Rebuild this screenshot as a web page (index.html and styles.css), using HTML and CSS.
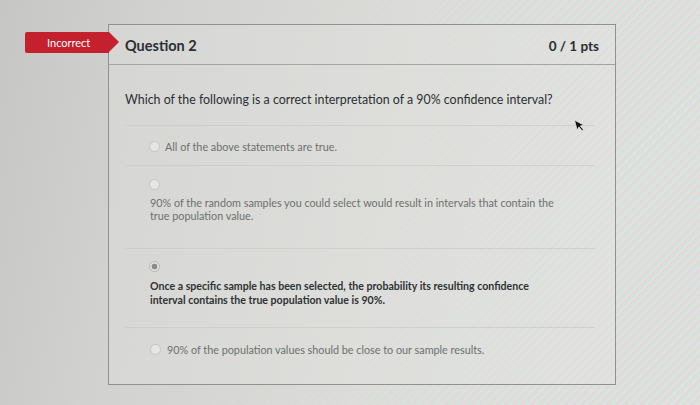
FILE: index.html
```html
<!DOCTYPE html>
<html>
<head>
<meta charset="utf-8">
<link rel="stylesheet" href="styles.css">
</head>
<body>
<div class="page">
  <div class="card">
    <div class="badge">Incorrect</div>
    <div class="header">
      <span class="qtitle">Question 2</span>
      <span class="pts">0 / 1 pts</span>
    </div>
    <div class="qbody">
      <p class="qtext">Which of the following is a correct interpretation of a 90% confidence interval?</p>
      <div class="answers">
        <div class="answer a1">
          <span class="radio"></span><span class="atext">All of the above statements are true.</span>
        </div>
        <div class="answer a2">
          <span class="radio"></span>
          <div class="atext">90% of the random samples you could select would result in intervals that contain the true population value.</div>
        </div>
        <div class="answer a3 selected">
          <span class="radio on"></span>
          <div class="atext">Once a specific sample has been selected, the probability its resulting confidence interval contains the true population value is 90%.</div>
        </div>
        <div class="answer a4">
          <span class="radio"></span><span class="atext">90% of the population values should be close to our sample results.</span>
        </div>
      </div>
    </div>
    <svg class="cursor" width="10" height="14" viewBox="0 0 10 14"><path d="M1 1 L1 11 L3.5 8.5 L5.5 13 L7 12.3 L5 8 L8.5 8 Z" fill="#111" stroke="#eee" stroke-width="0.6"/></svg>
  </div>
</div>
</body>
</html>
```
FILE: styles.css
```css
html, body {
  margin: 0;
  height: 100%;
}
body {
  width: 700px;
  height: 405px;
  overflow: hidden;
  font-family: Lato, "Open Sans", "Liberation Sans", sans-serif;
  background:
    linear-gradient(100deg, rgba(198,198,196,1) 0%, rgba(208,208,206,0.9) 20%, rgba(218,218,214,0.55) 55%, rgba(222,226,218,0) 80%),
    repeating-linear-gradient(135deg, #e8d6df 0px, #e8d6df 2px, #d3e6d4 2px, #d3e6d4 4px, #dde2e4 4px, #dde2e4 6px);
}
.page {
  padding: 24px 0 0 108px;
}
.card {
  position: relative;
  width: 508px;
  height: 361px;
  border: 1px solid #8f9290;
  box-sizing: border-box;
  background: rgba(226,226,224,0.35);
}
.badge {
  position: absolute;
  left: -84px;
  top: 7px;
  width: 84px;
  height: 21px;
  background: #c5202d;
  color: #fff;
  font-size: 11px;
  line-height: 21px;
  padding-left: 22px;
  box-sizing: border-box;
  border-radius: 2px 0 0 2px;
}
.badge::after {
  content: "";
  position: absolute;
  right: -10px;
  top: 0;
  border-left: 10px solid #c5202d;
  border-top: 10.5px solid transparent;
  border-bottom: 10.5px solid transparent;
}
.header {
  height: 40px;
  border-bottom: 1px solid #a4a6a4;
  display: flex;
  justify-content: space-between;
  align-items: center;
  padding: 2px 16px 0 16px;
  box-sizing: border-box;
  color: #2a2f33;
}
.qtitle {
  font-size: 14.5px;
  font-weight: 700;
}
.pts {
  font-size: 13.5px;
  font-weight: 700;
}
.qbody {
  padding: 26px 20px 0 16px;
}
.qtext {
  margin: 0;
  font-size: 12.4px;
  line-height: 18px;
  color: #2a2f33;
}
.answers {
  margin-top: 16px;
  width: 470px;
}
.answer {
  border-top: 1px solid #cfd0ce;
  padding-left: 24px;
  font-size: 10.8px;
  color: #6c706f;
}
.answer .atext {
  max-width: 412px;
}
.radio {
  display: inline-block;
  width: 11px;
  height: 11px;
  border: 1px solid #c3c5c3;
  border-radius: 50%;
  background: #e6e7e5;
  box-sizing: border-box;
  vertical-align: middle;
}
.radio.on {
  background: radial-gradient(circle, #8a8c8b 0 2.6px, #e1e2e0 3.2px);
  border-color: #b5b7b5;
}
.a1 {
  height: 40px;
  display: flex;
  align-items: center;
  gap: 5px;
  padding-top: 2px;
  box-sizing: border-box;
}
.a2 {
  height: 83px;
  padding-top: 10px;
  box-sizing: border-box;
}
.a2 .atext {
  margin-top: 6px;
  line-height: 13px;
  padding-left: 1px;
}
.a3 {
  height: 79px;
  padding-top: 9px;
  box-sizing: border-box;
}
.a3 .atext {
  margin-top: 7px;
  line-height: 14px;
  color: #2e3234;
  font-weight: 700;
  font-size: 10.6px;
  padding-left: 1px;
}
.a4 {
  display: flex;
  align-items: center;
  gap: 6px;
  padding-top: 15px;
  padding-left: 25px;
}
.cursor {
  position: absolute;
  left: 466px;
  top: 93px;
  transform: rotate(-15deg);
}
```
